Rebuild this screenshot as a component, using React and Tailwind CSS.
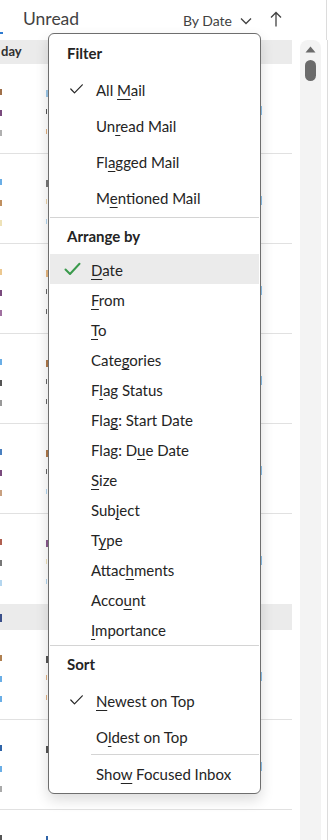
import React from 'react';

const FONT = "font-['Segoe_UI','Lato','Noto_Sans',sans-serif]";

// visible slivers of the mail list around the menu: [left edge, before menu]
const ROWS = [
  { marks: ['bg-[#a0704a]', 'bg-[#7a4a7e]', 'bg-[#b0b0b0]'], side: ['bg-[#9ec9ea]', 'bg-[#555]', 'bg-[#e0b080]'] },
  { marks: ['bg-[#6aaee6]', 'bg-[#c09060]', 'bg-[#eee2b8]'], side: ['bg-[#777]', 'bg-[#ecd4a8]', 'bg-[#b4d6ef]'] },
  { marks: ['bg-[#ecc890]', 'bg-[#7a4a7e]', 'bg-[#a070a0]'], side: ['bg-[#e8b880]', 'bg-[#666]', 'bg-[#666]'] },
  { marks: ['bg-[#6aaee6]', 'bg-[#555]', 'bg-[#999]'], side: ['bg-[#b07a4a]', 'bg-[#666]', 'bg-[#666]'] },
  { marks: ['bg-[#4a80c0]', 'bg-[#7a4a7e]', 'bg-[#c8a080]'], side: ['bg-[#b07a4a]', 'bg-[#666]', 'bg-[#b4d6ef]'] },
  { marks: ['bg-[#b06050]', 'bg-[#777]', 'bg-[#b4d6ef]'], side: ['bg-[#8a5a8e]', 'bg-[#eee2b8]', 'bg-[#b4d6ef]'] },
];

const ROWS2 = [
  { marks: ['bg-[#b08050]', 'bg-[#6aaee6]', 'bg-[#6aaee6]'], side: ['bg-[#555]', 'bg-[#e0b080]', 'bg-[#e0b080]'] },
  { marks: ['bg-[#2f64a8]', 'bg-[#6aaee6]', 'bg-[#aaa]'], side: ['bg-[#555]', 'bg-white', 'bg-white'] },
  { marks: ['bg-[#555]', 'bg-white', 'bg-white'], side: ['bg-[#2f64a8]', 'bg-white', 'bg-white'] },
];

function MailRow({ row, last }) {
  return (
    <div className={`relative h-[90px] ${last ? '' : 'border-b border-[#e1e1e1]'}`}>
      <span className={`absolute left-0 top-[25px] h-[6px] w-[2px] ${row.marks[0]}`} />
      <span className={`absolute left-0 top-[46px] h-[6px] w-[2px] ${row.marks[1]}`} />
      <span className={`absolute left-0 top-[66px] h-[6px] w-[2px] ${row.marks[2]}`} />
      <span className={`absolute left-[46px] top-[26px] h-[7px] w-[2px] ${row.side[0]}`} />
      <span className={`absolute left-[46px] top-[45px] h-[5px] w-[1px] ${row.side[1]}`} />
      <span className={`absolute left-[46px] top-[65px] h-[5px] w-[1px] ${row.side[2]}`} />
      <span className="absolute left-[261px] top-[42px] h-[9px] w-[1px] bg-[#8cc4ee]" />
    </div>
  );
}

function Check({ green }) {
  if (green) {
    return (
      <svg width="17" height="14" viewBox="0 0 17 14" className="shrink-0">
        <path d="M1.5 7.5 L6 12 L15.5 1.8" fill="none" stroke="#3a9a4c" strokeWidth="2" strokeLinecap="round" strokeLinejoin="round" />
      </svg>
    );
  }
  return (
    <svg width="13" height="10" viewBox="0 0 13 10" className="shrink-0">
      <path d="M0.8 5 L4.5 8.8 L12.3 0.8" fill="none" stroke="#262626" strokeWidth="1.2" strokeLinecap="round" strokeLinejoin="round" />
    </svg>
  );
}

function Label({ text, at }) {
  return (
    <span className="translate-y-px">
      {text.slice(0, at)}
      <span className="underline decoration-1 underline-offset-[3px]">{text[at]}</span>
      {text.slice(at + 1)}
    </span>
  );
}

function Heading({ children }) {
  return <div className="flex h-9 items-center pl-[17px] text-[15px] font-bold text-[#242424]">{children}</div>;
}

function CheckItem({ text, at, checked }) {
  return (
    <div className="flex h-9 items-center text-[15px] text-[#242424]">
      <div className="flex w-[46px] justify-end pr-[13px]">{checked && <Check />}</div>
      <Label text={text} at={at} />
    </div>
  );
}

function ArrangeItem({ text, at, checked }) {
  return (
    <div className={`flex h-[30px] items-center text-[15px] text-[#242424] ${checked ? 'bg-[#ebebeb]' : ''}`}>
      <div className="flex w-[41px] justify-end pr-[10px]">{checked && <Check green />}</div>
      <Label text={text} at={at} />
    </div>
  );
}

const ARRANGE = [
  ['Date', 0, true],
  ['From', 0],
  ['To', 0],
  ['Categories', 4],
  ['Flag Status', 1],
  ['Flag: Start Date', 3],
  ['Flag: Due Date', 7],
  ['Size', 0],
  ['Subject', 3],
  ['Type', 1],
  ['Attachments', 5],
  ['Account', 4],
  ['Importance', 0],
];

export default function App() {
  return (
    <div className={`relative h-[840px] w-[332px] overflow-hidden bg-white ${FONT}`}>
      {/* top bar */}
      <div className="relative flex h-[40px] items-start">
        <span className="absolute left-0 top-[32px] h-[2px] w-[3px] bg-[#2f7bd0]" />
        <div className="ml-[23px] mt-[6px] text-[17.5px] text-[#424242]">Unread</div>
        <div className="ml-auto mt-[10px] flex items-center text-[14px] text-[#424242]">
          <span>By Date</span>
          <svg width="12" height="8" viewBox="0 0 12 8" className="ml-[8px] mt-[1px]">
            <path d="M1 1.5 L6 6.5 L11 1.5" fill="none" stroke="#424242" strokeWidth="1.3" />
          </svg>
        </div>
        <svg width="12" height="16" viewBox="0 0 12 16" className="ml-[18px] mr-[50px] mt-[11px]">
          <path d="M6 15.5 V1.5 M1 6.5 L6 1.5 L11 6.5" fill="none" stroke="#424242" strokeWidth="1.3" />
        </svg>
      </div>

      <div className="flex">
        {/* mail list */}
        <div className="w-[292px]">
          <div className="flex h-[24px] items-center bg-[#ebebeb] pl-px text-[13px] font-bold text-[#303030]">
            <span>day</span>
          </div>
          {ROWS.map((row, i) => (
            <MailRow key={i} row={row} last={i === ROWS.length - 1} />
          ))}
          <div className="relative h-[26px] bg-[#ebebeb]">
            <span className="absolute left-0 top-[10px] h-[8px] w-[2px] bg-[#3a4f8a]" />
          </div>
          {ROWS2.map((row, i) => (
            <MailRow key={i} row={row} />
          ))}
        </div>

        {/* scrollbar */}
        <div className="ml-[8px] flex h-[800px] w-[21px] flex-col items-center rounded-t-[8px] bg-[#f3f3f3] pt-[6px]">
          <svg width="11" height="7" viewBox="0 0 11 7">
            <path d="M5.5 0.5 L10.5 6.5 H0.5 Z" fill="#6b6b6b" />
          </svg>
          <div className="mt-[7px] h-[21px] w-[11px] rounded-full bg-[#6b6b6b]" />
        </div>
        <div className="ml-[6px] h-[800px] w-[1px] bg-[#dcdcdc]" />
      </div>
      <div className="absolute right-[5px] top-0 h-[40px] w-[1px] bg-[#dcdcdc]" />

      {/* dropdown menu */}
      <div className="absolute left-[48px] top-[33px] w-[213px] rounded-[6px] border border-[#6e6e6e] bg-white px-[1px] pb-[2px] pt-[1px] shadow-[0_6px_14px_rgba(0,0,0,0.14)]">
        <Heading>Filter</Heading>
        <CheckItem text="All Mail" at={4} checked />
        <CheckItem text="Unread Mail" at={2} />
        <CheckItem text="Flagged Mail" at={2} />
        <CheckItem text="Mentioned Mail" at={1} />
        <div className="mt-[2px] h-px bg-[#d4d4d4]" />
        <Heading>Arrange by</Heading>
        {ARRANGE.map(([text, at, checked]) => (
          <ArrangeItem key={text} text={text} at={at} checked={checked} />
        ))}
        <div className="mt-px h-px bg-[#d4d4d4]" />
        <Heading>Sort</Heading>
        <CheckItem text="Newest on Top" at={0} checked />
        <CheckItem text="Oldest on Top" at={1} />
        <div className="ml-[41px] h-px bg-[#d4d4d4]" />
        <CheckItem text="Show Focused Inbox" at={3} />
      </div>
    </div>
  );
}
